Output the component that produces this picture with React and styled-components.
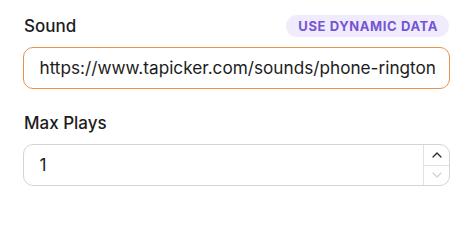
import React from "react";
import styled, { createGlobalStyle } from "styled-components";

const Global = createGlobalStyle`
  html, body { margin: 0; padding: 0; background: #ffffff; }
  body { font-family: Inter, "Noto Sans", sans-serif; color: #1c1c1e; }
`;

const Panel = styled.div`
  width: 427px;
  padding: 15px 0 0 23px;
  display: flex;
  flex-direction: column;
`;

const Field = styled.div`
  display: flex;
  flex-direction: column;
  gap: 10px;
  margin-bottom: ${(p) => p.$mb || 0}px;
`;

const LabelRow = styled.div`
  height: 22px;
  display: flex;
  align-items: center;
  justify-content: space-between;
`;

const Label = styled.label`
  font-size: 17px;
  font-weight: 500;
  line-height: 22px;
  padding-left: 1px;
  color: #1c1c1e;
`;

const Badge = styled.span`
  height: 22px;
  padding: 0 11px 0 12px;
  border-radius: 11px;
  background: #f0ecfd;
  color: #7456d3;
  font-size: 13px;
  font-weight: 700;
  letter-spacing: 0.6px;
  line-height: 22px;
  margin-right: 1px;
`;

const TextInput = styled.div`
  box-sizing: border-box;
  height: 42px;
  border: ${(p) => (p.$focused ? "1.6px solid #e6914d" : "1.5px solid #d4d4d6")};
  border-radius: 10px;
  display: flex;
  align-items: stretch;
  overflow: hidden;
`;

const Value = styled.div`
  flex: 1;
  min-width: 0;
  padding: 0 14px 0 15.5px;
  font-size: 17.2px;
  line-height: 39px;
  white-space: nowrap;
  overflow: hidden;
  color: #1c1c1e;
`;

const Spinner = styled.div`
  width: 25px;
  border-left: 1px solid #e2e2e4;
  display: flex;
  flex-direction: column;
`;

const SpinButton = styled.div`
  flex: 1;
  display: flex;
  align-items: center;
  justify-content: center;
  color: ${(p) => (p.$disabled ? "#d2d2d4" : "#2a2a2c")};
  & + & {
    border-top: 1px solid #e2e2e4;
  }
`;

const Chevron = ({ up }) => (
  <svg width="10" height="6" viewBox="0 0 10 6" fill="none">
    <path
      d={up ? "M1 5L5 1L9 5" : "M1 1L5 5L9 1"}
      stroke="currentColor"
      strokeWidth="1.3"
      strokeLinecap="round"
      strokeLinejoin="round"
    />
  </svg>
);

export default function App() {
  return (
    <>
      <Global />
      <Panel>
        <Field $mb={23}>
          <LabelRow>
            <Label>Sound</Label>
            <Badge>USE DYNAMIC DATA</Badge>
          </LabelRow>
          <TextInput $focused>
            <Value>https://www.tapicker.com/sounds/phone-rington</Value>
          </TextInput>
        </Field>
        <Field>
          <LabelRow>
            <Label>Max Plays</Label>
          </LabelRow>
          <TextInput>
            <Value>1</Value>
            <Spinner>
              <SpinButton>
                <Chevron up />
              </SpinButton>
              <SpinButton $disabled>
                <Chevron />
              </SpinButton>
            </Spinner>
          </TextInput>
        </Field>
      </Panel>
    </>
  );
}
